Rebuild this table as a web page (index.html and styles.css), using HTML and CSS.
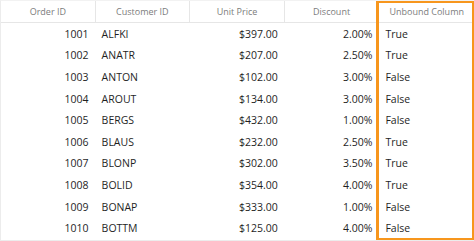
FILE: index.html
```html
<!DOCTYPE html>
<html>
<head>
<meta charset="utf-8">
<link rel="stylesheet" href="styles.css">
</head>
<body>
<div class="grid-wrap">
  <div class="grid">
    <div class="hd">Order ID</div>
    <div class="hd">Customer ID</div>
    <div class="hd">Unit Price</div>
    <div class="hd">Discount</div>
    <div class="hd last">Unbound Column</div>

    <div class="c r">1001</div><div class="c l">ALFKI</div><div class="c r">$397.00</div><div class="c r">2.00%</div><div class="c l">True</div>
    <div class="c r">1002</div><div class="c l">ANATR</div><div class="c r">$207.00</div><div class="c r">2.50%</div><div class="c l">True</div>
    <div class="c r">1003</div><div class="c l">ANTON</div><div class="c r">$102.00</div><div class="c r">3.00%</div><div class="c l">False</div>
    <div class="c r">1004</div><div class="c l">AROUT</div><div class="c r">$134.00</div><div class="c r">3.00%</div><div class="c l">False</div>
    <div class="c r">1005</div><div class="c l">BERGS</div><div class="c r">$432.00</div><div class="c r">1.00%</div><div class="c l">False</div>
    <div class="c r">1006</div><div class="c l">BLAUS</div><div class="c r">$232.00</div><div class="c r">2.50%</div><div class="c l">True</div>
    <div class="c r">1007</div><div class="c l">BLONP</div><div class="c r">$302.00</div><div class="c r">3.50%</div><div class="c l">True</div>
    <div class="c r">1008</div><div class="c l">BOLID</div><div class="c r">$354.00</div><div class="c r">4.00%</div><div class="c l">True</div>
    <div class="c r">1009</div><div class="c l">BONAP</div><div class="c r">$333.00</div><div class="c r">1.00%</div><div class="c l">False</div>
    <div class="c r">1010</div><div class="c l">BOTTM</div><div class="c r">$125.00</div><div class="c r">4.00%</div><div class="c l">False</div>
  </div>
  <div class="highlight"></div>
</div>
</body>
</html>
```

FILE: styles.css
```css
html, body {
  margin: 0;
  padding: 0;
  background: #ffffff;
}

.grid-wrap {
  position: relative;
  width: 474px;
  height: 241px;
  overflow: hidden;
  box-sizing: border-box;
  border-left: 1px solid #ececec;
  border-bottom: 1px solid #ececec;
  border-top: 1px solid #f2f2f2;
}

.grid {
  display: grid;
  grid-template-columns: repeat(5, 1fr);
  grid-template-rows: 22px repeat(10, 21.6px);
  font-family: "Open Sans", "Noto Sans", sans-serif;
}

.hd {
  font-size: 9px;
  color: #7c7c7c;
  display: flex;
  align-items: center;
  justify-content: center;
  border-bottom: 1px solid #e6e6e6;
  border-right: 1px solid #e6e6e6;
}

.hd.last {
  border-right: none;
}

.c {
  font-size: 10.5px;
  color: #1f1f1f;
  display: flex;
  align-items: center;
}

.c.r {
  justify-content: flex-end;
  padding-right: 7px;
}

.c.l {
  justify-content: flex-start;
  padding-left: 6px;
}

.highlight {
  position: absolute;
  left: 375px;
  top: -1px;
  width: 99px;
  height: 241px;
  box-sizing: border-box;
  border: 3px solid #f7961d;
}
```
